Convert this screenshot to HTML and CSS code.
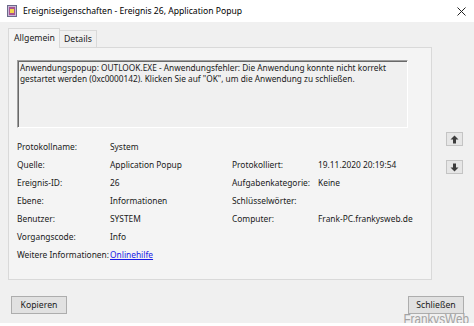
FILE: index.html
```html
<!DOCTYPE html>
<html lang="de">

<head>
  <meta charset="UTF-8" />
  <title>Ereigniseigenschaften</title>
  <link rel="stylesheet" href="styles.css">
</head>

<body>
  <div class="window">
    <div class="titlebar">
      <svg class="appicon" width="10" height="12" viewBox="0 0 10 12">
        <rect x="0.5" y="0.5" width="9" height="11" fill="#c9b6d6" stroke="#6b6b8a" />
        <rect x="2" y="2" width="6" height="8" fill="#a8548f" />
        <rect x="3" y="4" width="4" height="4" fill="#f2d64b" />
      </svg>
      <span class="title">Ereigniseigenschaften - Ereignis 26, Application Popup</span>
      <svg class="close" width="9" height="9" viewBox="0 0 9 9">
        <path d="M0.5 0.5 L8.5 8.5 M8.5 0.5 L0.5 8.5" stroke="#222" stroke-width="1" />
      </svg>
    </div>

    <div class="content">
      <div class="tabarea">
        <div class="tabs">
          <span class="tab active">Allgemein</span>
          <span class="tab">Details</span>
        </div>
        <div class="panel">
          <div class="message">Anwendungspopup: OUTLOOK.EXE - Anwendungsfehler: Die Anwendung konnte nicht korrekt gestartet werden (0xc0000142). Klicken Sie auf "OK", um die Anwendung zu schließen.</div>
          <div class="fields">
            <span>Protokollname:</span><span>System</span><span></span><span></span>
            <span>Quelle:</span><span>Application Popup</span><span>Protokolliert:</span><span>19.11.2020 20:19:54</span>
            <span>Ereignis-ID:</span><span>26</span><span>Aufgabenkategorie:</span><span>Keine</span>
            <span>Ebene:</span><span>Informationen</span><span>Schlüsselwörter:</span><span></span>
            <span>Benutzer:</span><span>SYSTEM</span><span>Computer:</span><span>Frank-PC.frankysweb.de</span>
            <span>Vorgangscode:</span><span>Info</span><span></span><span></span>
            <span>Weitere Informationen:</span><a class="link">Onlinehilfe</a><span></span><span></span>
          </div>
        </div>
      </div>
      <div class="side">
        <button class="arrow">
          <svg width="9" height="9" viewBox="0 0 9 9"><path d="M4.5 0.5 L8.5 4.5 L6 4.5 L6 8.5 L3 8.5 L3 4.5 L0.5 4.5 Z" fill="#3c3c3c" /></svg>
        </button>
        <button class="arrow">
          <svg width="9" height="9" viewBox="0 0 9 9"><path d="M4.5 8.5 L8.5 4.5 L6 4.5 L6 0.5 L3 0.5 L3 4.5 L0.5 4.5 Z" fill="#3c3c3c" /></svg>
        </button>
      </div>
    </div>

    <div class="footer">
      <button class="btn">Kopieren</button>
      <button class="btn">Schließen</button>
    </div>
    <div class="watermark">FrankysWeb</div>
  </div>
</body>

</html>
```

FILE: styles.css
```css
* {
    margin: 0;
    padding: 0;
    box-sizing: border-box;
}

body {
    background-color: #ffffff;
    font-family: "Noto Sans", sans-serif;
    font-size: 8.7px;
    color: #1a1a1a;
}

/* Window frame */
.window {
    position: relative;
    width: 474px;
    height: 323px;
    background-color: #f0f0f0;
}

/* Title bar */
.titlebar {
    display: flex;
    align-items: center;
    height: 22px;
    padding: 0 8px 0 7px;
    background-color: #ffffff;
    font-size: 8.6px;
    color: #000;
}

.appicon {
    margin-right: 6px;
}

.title {
    flex: 1;
}

/* Main area */
.content {
    display: flex;
    padding: 5px 0 0 8px;
}

.tabarea {
    width: 424px;
}

.tabs {
    display: flex;
    align-items: flex-end;
    height: 20px;
}

.tab {
    height: 17px;
    padding: 2px 4px 0;
    border: 1px solid #d9d9d9;
    border-bottom: none;
    background-color: #f0f0f0;
}

.tab.active {
    position: relative;
    z-index: 1;
    height: 20px;
    margin-right: -1px;
    margin-bottom: -1px;
    padding: 3px 4px 0 5px;
    background-color: #f4f4f4;
}

.panel {
    height: 233px;
    padding: 12px 9px 0 8px;
    border: 1px solid #d9d9d9;
    background-color: #f4f4f4;
}

.message {
    width: 391px;
    height: 68px;
    padding: 2px 2px;
    border: 1px solid #ffffff;
    border-top-color: #a0a0a0;
    border-left-color: #a0a0a0;
    box-shadow: inset 1px 1px 0 #696969;
    background-color: #f0f0f0;
    font-size: 8.3px;
    line-height: 10.5px;
}

.fields {
    display: grid;
    grid-template-columns: 93px 122px 86px 1fr;
    grid-auto-rows: 18px;
    align-items: center;
    margin-top: 9px;
    font-size: 8.4px;
    white-space: nowrap;
}

.link {
    color: #1a1ae6;
    text-decoration: underline;
}

/* Arrow buttons on the right */
.side {
    display: flex;
    flex-direction: column;
    gap: 14px;
    padding: 105px 0 0 14px;
}

.arrow {
    display: flex;
    align-items: center;
    justify-content: center;
    width: 17px;
    height: 14px;
    border: 1px solid #c4c4c4;
    background-color: #e6e6e6;
}

/* Bottom buttons */
.footer {
    display: flex;
    justify-content: space-between;
    padding: 16px 10px 0 11px;
}

.btn {
    width: 56px;
    height: 18px;
    border: 1px solid #adadad;
    background-color: #e1e1e1;
    font-family: "Noto Sans", sans-serif;
    font-size: 8.7px;
    color: #1a1a1a;
}

.watermark {
    position: absolute;
    right: 5px;
    bottom: -2px;
    font-family: "Liberation Sans", sans-serif;
    font-size: 15px;
    line-height: 13px;
    color: #a3a3a3;
    transform: scaleX(0.78);
    transform-origin: right bottom;
}
```
